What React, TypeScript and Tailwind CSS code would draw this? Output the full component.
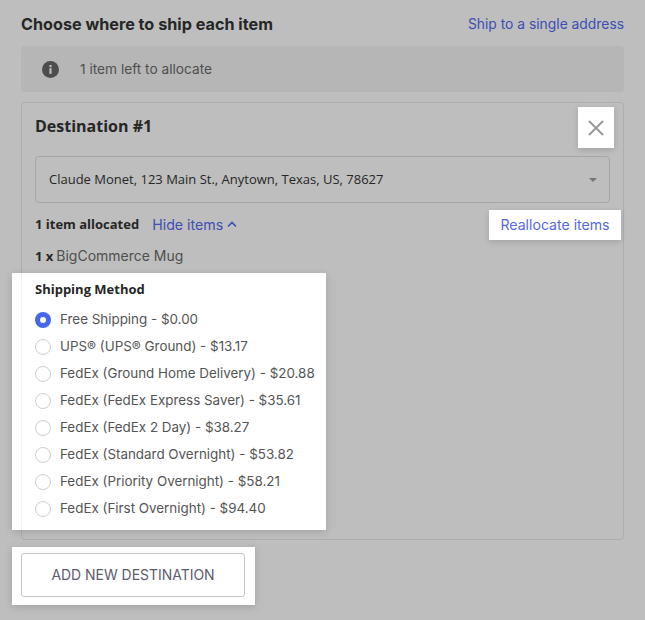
const sans = "font-['Inter','Liberation_Sans',sans-serif]";
const open = "font-['Open_Sans','Liberation_Sans',sans-serif]";

const options = [
  "Free Shipping - $0.00",
  "UPS® (UPS® Ground) - $13.17",
  "FedEx (Ground Home Delivery) - $20.88",
  "FedEx (FedEx Express Saver) - $35.61",
  "FedEx (FedEx 2 Day) - $38.27",
  "FedEx (Standard Overnight) - $53.82",
  "FedEx (Priority Overnight) - $58.21",
  "FedEx (First Overnight) - $94.40",
];

function Radio({ checked }: { checked: boolean }) {
  return checked ? (
    <span className="flex h-4 w-4 shrink-0 items-center justify-center rounded-full bg-[#4668e8]">
      <span className="h-[6px] w-[6px] rounded-full bg-white" />
    </span>
  ) : (
    <span className="h-4 w-4 shrink-0 rounded-full border border-[#cfcfcf] bg-white" />
  );
}

export default function App() {
  return (
    <div className={`h-[620px] w-[645px] overflow-hidden bg-[#bebebe] px-[21px] ${sans}`}>
      <div className="flex h-[46px] w-[603px] items-center justify-between pt-[2px]">
        <h2 className="text-[16.2px] font-bold text-[#262626]">Choose where to ship each item</h2>
        <a className="text-[13.85px] text-[#3c4fb4]">Ship to a single address</a>
      </div>

      <div className="flex h-[46px] w-[603px] items-center rounded-[4px] bg-[#b6b6b6] pl-[21px]">
        <svg width="17" height="17" viewBox="0 0 17 17" className="mr-[21px]">
          <circle cx="8.5" cy="8.5" r="8.5" fill="#4d4d4d" />
          <rect x="7.4" y="7.2" width="2.2" height="5.6" fill="#bebebe" />
          <rect x="7.4" y="4" width="2.2" height="2.2" fill="#bebebe" />
        </svg>
        <span className="text-[13.7px] text-[#4f4f4f]">1 item left to allocate</span>
      </div>

      <div className="relative mt-[10px] h-[438px] w-[603px] rounded-[4px] border border-[#adadb3] px-[13px]">
        <button className="absolute right-[9px] top-[4px] flex h-[41px] w-[36px] items-center justify-center bg-white shadow-[0_2px_6px_rgba(0,0,0,0.15)]">
          <svg width="18" height="18" viewBox="0 0 18 18" fill="none" stroke="#999999" strokeWidth="2">
            <path d="M2 2 L16 16 M16 2 L2 16" />
          </svg>
        </button>

        <h3 className={`pt-[11px] text-[16px] font-bold leading-[24px] text-[#262626] ${open}`}>Destination #1</h3>

        <div className={`mt-[18px] flex h-[47px] items-center justify-between rounded-[4px] border border-[#a6a6a6] pl-[13px] pr-[12px] text-[13px] text-[#262626] ${open}`}>
          <span>Claude Monet, 123 Main St., Anytown, Texas, US, 78627</span>
          <span className="h-0 w-0 border-x-[4px] border-t-[4px] border-x-transparent border-t-[#757575]" />
        </div>

        <div className="mt-[7px] flex h-[30px] items-center justify-between">
          <div className="flex items-center">
            <span className={`text-[13px] font-bold text-[#262626] ${open}`}>1 item allocated</span>
            <a className="ml-[13px] text-[14.2px] text-[#3c4fb4]">Hide items</a>
            <svg width="10" height="7" viewBox="0 0 10 7" fill="none" stroke="#3c4fb4" strokeWidth="1.6" className="ml-[4px]">
              <path d="M1 5.5 L5 1.5 L9 5.5" />
            </svg>
          </div>
          <a className="mr-[-11px] flex h-[30px] w-[132px] items-center justify-center bg-white text-[14.1px] text-[#5568e0] shadow-[0_2px_6px_rgba(0,0,0,0.15)]">
            Reallocate items
          </a>
        </div>

        <p className="mt-[6px] text-[14px] leading-[20px] text-[#4f4f4f]">
          <b className={`mr-[-1px] text-[13px] text-[#262626] ${open}`}>1 x</b> BigCommerce Mug
        </p>

        <div className="relative ml-[-23px] mt-[7px] h-[257px] w-[314px] bg-white pl-[23px] pt-[6px] shadow-[0_2px_8px_rgba(0,0,0,0.15)]">
          <span className="absolute bottom-0 left-[9px] top-0 w-px bg-[#f2f2f4]" />
          <h4 className={`text-[13px] font-bold leading-[20px] text-[#262626] ${open}`}>Shipping Method</h4>
          <div className="mt-[7px] flex flex-col">
            {options.map((o, i) => (
              <label key={o} className="flex h-[27px] items-center gap-[9px] text-[13.4px] text-[#545454]">
                <Radio checked={i === 0} />
                <span>{o}</span>
              </label>
            ))}
          </div>
        </div>
      </div>

      <div className="relative mt-[7px] ml-[-9px] flex h-[58px] w-[243px] items-start bg-white pl-[9px] pt-[6px] shadow-[0_2px_8px_rgba(0,0,0,0.15)]">
        <button className="flex h-[44px] w-[224px] items-center justify-center rounded-[3px] border border-[#c4c4c4] bg-white pt-[1px] text-[13.95px] font-normal text-[#5c5c6c]">
          ADD NEW DESTINATION
        </button>
      </div>
    </div>
  );
}
